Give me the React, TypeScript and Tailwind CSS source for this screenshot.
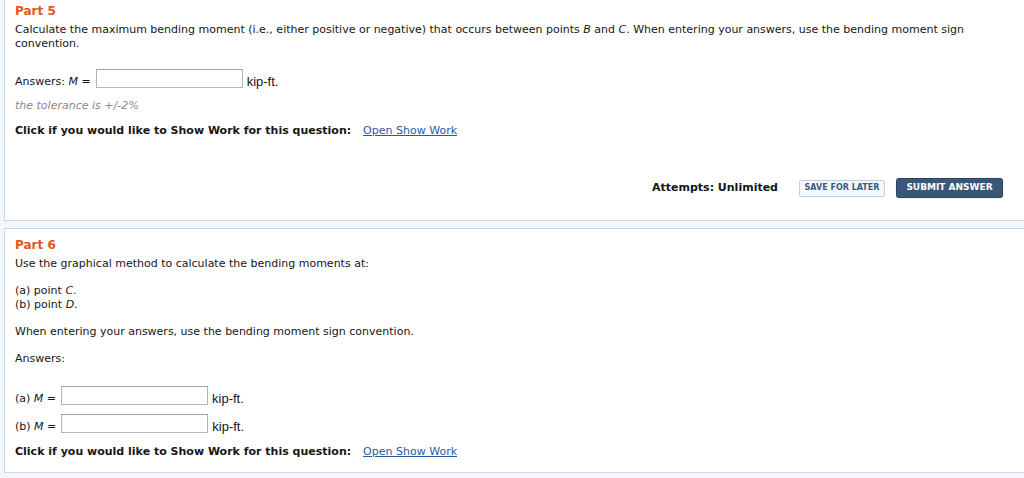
import React from "react";

const font = { fontFamily: '"DejaVu Sans", Verdana, sans-serif' };

function AnswerRow({ label, mt }: { label: React.ReactNode; mt: string }) {
  return (
    <div className={`flex items-end ${mt}`}>
      <span className="leading-[14px]">{label}</span>
      <input
        type="text"
        className="ml-[5px] mb-[1px] h-[19px] w-[147px] border border-[#b4b4b4] border-t-[#a0a0a0] bg-white outline-none"
      />
      <span
        className="ml-[4px] leading-[14px] text-[13px]"
        style={{ fontFamily: '"Liberation Sans", Arial, sans-serif' }}
      >
        kip-ft.
      </span>
    </div>
  );
}

function ShowWork({ mt }: { mt: string }) {
  return (
    <div className={`${mt} leading-[14px]`}>
      <span className="font-bold">Click if you would like to Show Work for this question:</span>
      <a href="#" className="ml-[12px] text-[#2a5aa0] underline">
        Open Show Work
      </a>
    </div>
  );
}

export default function App() {
  return (
    <div
      className="min-h-screen bg-[#f4f7fa] pl-[4px] text-[11px] text-[#161616]"
      style={font}
    >
      {/* Part 5 */}
      <div className="h-[221px] border-l border-b border-[#cfd7e1] bg-white pl-[10px] pt-[4px]">
        <div className="text-[12px] font-bold leading-[14px] text-[#e0561c]">Part 5</div>
        <p className="mt-[5px] leading-[14px]">
          Calculate the maximum bending moment (i.e., either positive or negative) that occurs between points <i>B</i> and <i>C</i>. When entering your answers, use the bending moment sign
          <br />
          convention.
        </p>
        <AnswerRow label={<>Answers: <i>M</i> =</>} mt="mt-[18px]" />
        <div className="mt-[10px] leading-[14px] italic text-[#8a8a8a]">the tolerance is +/-2%</div>
        <ShowWork mt="mt-[11px]" />
        <div className="mt-[40px] flex items-center justify-end pr-[21px]">
          <span className="font-bold leading-[14px]">Attempts: Unlimited</span>
          <button className="ml-[21px] flex h-[17px] w-[86px] items-center justify-center whitespace-nowrap rounded-[2px] border border-[#c5cfdb] bg-[#f6f9fc] text-[8px] font-bold text-[#3c5a80]">
            SAVE FOR LATER
          </button>
          <button className="ml-[11px] flex h-[20px] w-[107px] items-center justify-center whitespace-nowrap rounded-[3px] border border-[#2e4560] bg-[#3b5777] text-[9px] font-bold text-white shadow-[0_0_1px_#8fa3ba]">
            SUBMIT ANSWER
          </button>
        </div>
      </div>

      {/* Part 6 */}
      <div className="mt-[7px] h-[245px] border-t border-l border-b border-[#cfd7e1] bg-white pl-[10px] pt-[9px]">
        <div className="text-[12px] font-bold leading-[14px] text-[#e0561c]">Part 6</div>
        <p className="mt-[5px] leading-[14px]">Use the graphical method to calculate the bending moments at:</p>
        <p className="mt-[13px] leading-[14px]">
          (a) point <i>C</i>.
          <br />
          (b) point <i>D</i>.
        </p>
        <p className="mt-[13px] leading-[14px]">When entering your answers, use the bending moment sign convention.</p>
        <p className="mt-[13px] leading-[14px]">Answers:</p>
        <AnswerRow label={<>(a) <i>M</i> =</>} mt="mt-[20px]" />
        <AnswerRow label={<>(b) <i>M</i> =</>} mt="mt-[8px]" />
        <ShowWork mt="mt-[11px]" />
      </div>
    </div>
  );
}
